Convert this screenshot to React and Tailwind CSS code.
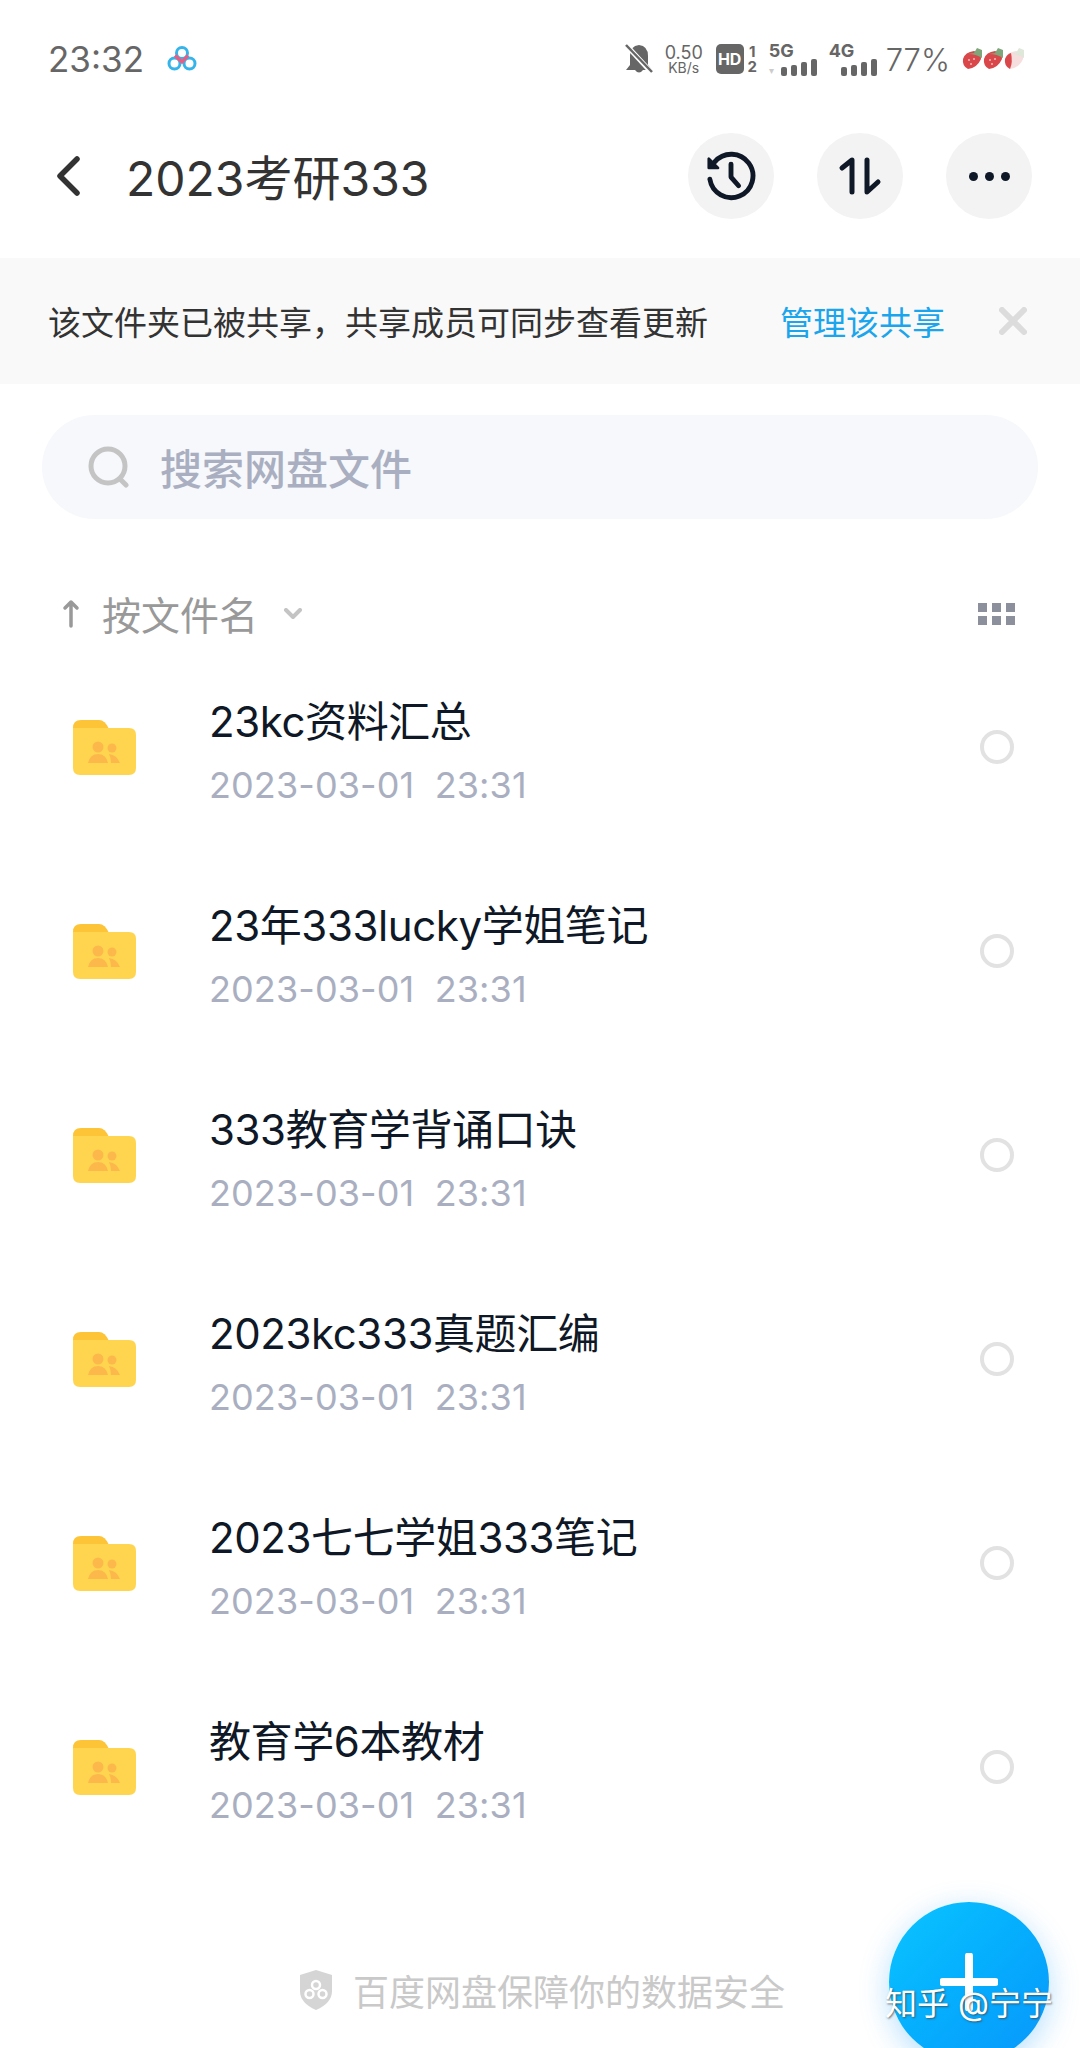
const files = ["23kc资料汇总", "23年333lucky学姐笔记", "333教育学背诵口诀", "2023kc333真题汇编", "2023七七学姐333笔记", "教育学6本教材"]

function CloudLogo({ className, stroke1 = "#35b4ea", stroke2 = "#ef5b7f" }) {
  return (
    <svg viewBox="0 0 30 26" className={className} fill="none">
      <circle cx="7.5" cy="17.5" r="5.5" stroke={stroke1} strokeWidth="3" />
      <circle cx="22.5" cy="17.5" r="5.5" stroke={stroke1} strokeWidth="3" />
      <circle cx="15" cy="7" r="5.5" stroke="#35b4ea" strokeWidth="3" />
      <path d="M8 9.5 L15 16 L21 9.5" stroke={stroke2} strokeWidth="3.2" />
    </svg>
  )
}

function Bars() {
  return (
    <div className="flex items-end gap-[4px]">
      <span className="w-[6px] h-[9px] rounded-[2px] bg-[#666666]" />
      <span className="w-[6px] h-[11px] rounded-[2px] bg-[#666666]" />
      <span className="w-[6px] h-[14px] rounded-[2px] bg-[#666666]" />
      <span className="w-[6px] h-[17px] rounded-[2px] bg-[#666666]" />
    </div>
  )
}

function Strawberry({ pale }) {
  return (
    <svg viewBox="0 0 21 22" className="w-[21px] h-[22px]">
      <path d="M1 11 Q3 4 12 3 Q20 5 19 11 Q15 20 6 21 Q0 18 1 11Z" fill={pale ? "#f6dede" : "#d9474a"} />
      <path d="M6 6 L12 5 L15 0 L20 2 L20 10 Q14 6 6 6Z" fill={pale ? "#dfe6da" : "#7fa67a"} />
      {pale ? <path d="M1 11 Q3 6 7 5 Q9 14 6 21 Q0 18 1 11Z" fill="#d9474a" /> : null}
      {pale ? null : <circle cx="7" cy="12" r="1" fill="#f4b9b9" />}
      {pale ? null : <circle cx="12" cy="11" r="1" fill="#f4b9b9" />}
      {pale ? null : <circle cx="9" cy="16" r="1" fill="#f4b9b9" />}
    </svg>
  )
}

function FolderIcon() {
  return (
    <svg viewBox="0 0 63 55" className="w-[63px] h-[55px] mb-[10px]">
      <path d="M0 8 Q0 0 8 0 H26 Q32 0 36 9 H0Z" fill="#fcc436" />
      <path d="M0 8 H56 Q63 8 63 15 V48 Q63 55 56 55 H7 Q0 55 0 48Z" fill="#ffd54f" />
      <circle cx="25" cy="27" r="5.5" fill="#fdb84c" />
      <circle cx="39" cy="28" r="4.5" fill="#fdb84c" />
      <path d="M15 43 Q17 34 25 34 Q33 34 35 43Z" fill="#fdb84c" />
      <path d="M36 34 Q44 35 47 43 H38 Q38 38 36 34Z" fill="#fdb84c" />
    </svg>
  )
}

function FileRow({ name }) {
  return (
    <div className="flex items-center h-[204px] pl-[73px] pr-[66px]">
      <FolderIcon />
      <div className="ml-[73px] flex-1">
        <div className="pt-[3px] text-[42px] leading-[50px] tracking-[-0.4px] text-[#0f1826]">{name}</div>
        <div className="mt-[13px] text-[36px] leading-[50px] tracking-[0.1px] text-[#a9afc0] whitespace-pre">2023-03-01  23:31</div>
      </div>
      <span className="w-[34px] h-[34px] mb-[10px] rounded-full border-4 border-[#e2e2e2]" />
    </div>
  )
}

export default function App() {
  return (
    <div className="relative w-[1080px] h-[2048px] overflow-hidden bg-white font-['Inter','Noto_Sans_CJK_SC',sans-serif]">
      {/* 状态栏 */}
      <div className="flex items-center h-[118px] pl-[48px] pr-[55px] text-[#666666]">
        <span className="text-[35px] leading-none">23:32</span>
        <CloudLogo className="ml-[23px] w-[30px] h-[26px]" />
        <div className="ml-auto flex items-center">
          <svg viewBox="0 0 28 30" className="w-[28px] h-[30px]">
            <path d="M14 1 Q23 2 23 12 V21 L27 26 H1 L5 21 V12 Q5 2 14 1Z" fill="#666666" />
            <path d="M10 26 Q14 31 18 26Z" fill="#666666" />
            <path d="M1 1 L27 29" stroke="#ffffff" strokeWidth="5" />
            <path d="M1 1 L27 28" stroke="#666666" strokeWidth="2.5" />
          </svg>
          <div className="ml-[12px] w-[38px] text-center leading-none">
            <div className="text-[18px] leading-[17px]">0.50</div>
            <div className="text-[14px] leading-[13px]">KB/s</div>
          </div>
          <div className="ml-[13px] w-[28px] h-[30px] rounded-[5px] bg-[#666666] text-white text-[16px] font-bold flex items-center justify-center leading-none">HD</div>
          <div className="ml-[3px] text-[15px] font-bold leading-[15px] w-[11px] text-center">
            <div>1</div>
            <div>2</div>
          </div>
          <div className="ml-[11px] w-[48px] flex flex-col">
            <span className="text-[18px] font-bold leading-[17px]">5G</span>
            <div className="flex items-end justify-between">
              <span className="text-[10px] leading-[12px] text-[#cccccc]">▾</span>
              <Bars />
            </div>
          </div>
          <div className="ml-[12px] w-[48px] flex flex-col">
            <span className="text-[18px] font-bold leading-[17px]">4G</span>
            <div className="flex justify-end">
              <Bars />
            </div>
          </div>
          <span className="ml-[9px] text-[31px] leading-none font-light">77%</span>
          <div className="ml-[12px] flex">
            <Strawberry />
            <Strawberry />
            <Strawberry pale />
          </div>
        </div>
      </div>

      {/* 标题栏 */}
      <div className="flex items-center h-[116px] mb-[24px] pl-[56px] pr-[48px]">
        <svg viewBox="0 0 24 40" className="w-[24px] h-[40px]">
          <path d="M21 3 L4 20 L21 37" fill="none" stroke="#333333" strokeWidth="5.5" strokeLinecap="round" strokeLinejoin="round" />
        </svg>
        <span className="ml-[46px] pt-[6px] text-[48px] leading-none text-[#333333]">2023考研333</span>
        <div className="ml-auto flex gap-[43px]">
          <div className="w-[86px] h-[86px] rounded-full bg-[#f3f3f4] flex items-center justify-center">
            <svg viewBox="0 0 48 48" className="w-[52px] h-[52px]" fill="none" stroke="#0f1826" strokeWidth="4.5" strokeLinecap="round" strokeLinejoin="round">
              <path d="M4.5 27 A20 20 0 1 0 9 11" />
              <path d="M3.5 8 V16.5 H12 Z" fill="#0f1826" strokeWidth="2.5" />
              <path d="M24 13 V25 L31 33" />
            </svg>
          </div>
          <div className="w-[86px] h-[86px] rounded-full bg-[#f3f3f4] flex items-center justify-center">
            <svg viewBox="0 0 44 40" className="w-[44px] h-[40px]" fill="none" stroke="#0f1826" strokeWidth="5" strokeLinecap="round" strokeLinejoin="round">
              <path d="M14 36 V4 L4 12" />
              <path d="M29 4 V36 L40 26" />
            </svg>
          </div>
          <div className="w-[86px] h-[86px] rounded-full bg-[#f3f3f4] flex items-center justify-center gap-[7px]">
            <span className="w-[9px] h-[9px] rounded-full bg-[#0f1826]" />
            <span className="w-[9px] h-[9px] rounded-full bg-[#0f1826]" />
            <span className="w-[9px] h-[9px] rounded-full bg-[#0f1826]" />
          </div>
        </div>
      </div>

      {/* 共享提示 */}
      <div className="flex items-center h-[126px] pl-[48px] pr-[53px] bg-[#f9f9f9]">
        <span className="pt-[5px] text-[33px] leading-none text-[#333333] whitespace-nowrap">该文件夹已被共享，共享成员可同步查看更新</span>
        <span className="ml-[72px] pt-[5px] text-[33px] leading-none text-[#1ba5ec] whitespace-nowrap">管理该共享</span>
        <svg viewBox="0 0 28 28" className="ml-auto w-[28px] h-[28px]">
          <path d="M3 3 L25 25 M25 3 L3 25" stroke="#dcdcdc" strokeWidth="6" strokeLinecap="round" />
        </svg>
      </div>

      {/* 搜索框 */}
      <div className="flex items-center h-[104px] mt-[31px] mx-[42px] pl-[46px] rounded-full bg-[#f6f8fb]">
        <svg viewBox="0 0 42 42" className="w-[42px] h-[42px]" fill="none" stroke="#c4c4c4" strokeWidth="5" strokeLinecap="round">
          <circle cx="20" cy="20" r="17" />
          <path d="M32 33 L38 39" />
        </svg>
        <span className="ml-[30px] pt-[5px] text-[42px] leading-none font-medium text-[#a9afc0]">搜索网盘文件</span>
      </div>

      {/* 排序 */}
      <div className="flex items-center h-[72px] mt-[59px] pl-[62px] pr-[65px]">
        <svg viewBox="0 0 18 30" className="w-[18px] h-[30px]" fill="none" stroke="#999999" strokeWidth="3.5" strokeLinecap="round" strokeLinejoin="round">
          <path d="M9 27 V3 M3 9 L9 3 L15 9" />
        </svg>
        <span className="ml-[22px] pt-[2px] text-[39px] leading-none text-[#999999]">按文件名</span>
        <svg viewBox="0 0 20 12" className="ml-[25px] w-[20px] h-[12px]" fill="none" stroke="#c4c4c4" strokeWidth="4" strokeLinecap="round" strokeLinejoin="round">
          <path d="M3 2 L10 9 L17 2" />
        </svg>
        <div className="ml-auto grid grid-cols-3 gap-x-[5px] gap-y-[4px]">
          {[0, 1, 2, 3, 4, 5].map((i) => (
            <span key={i} className="w-[9px] h-[9px] bg-[#8c8f9c]" />
          ))}
        </div>
      </div>

      {/* 文件列表 */}
      <div>
        {files.map((name) => (
          <FileRow key={name} name={name} />
        ))}
      </div>

      {/* 底部 */}
      <div className="flex items-center h-[52px] mt-[90px] pl-[298px]">
        <svg viewBox="0 0 36 42" className="w-[36px] h-[42px]">
          <path d="M18 1 L34 6 V22 Q34 34 18 41 Q2 34 2 22 V6Z" fill="#d5d5d5" />
          <circle cx="11.5" cy="25" r="4" fill="none" stroke="#ffffff" strokeWidth="2.5" />
          <circle cx="24.5" cy="25" r="4" fill="none" stroke="#ffffff" strokeWidth="2.5" />
          <circle cx="18" cy="16" r="4" fill="none" stroke="#ffffff" strokeWidth="2.5" />
        </svg>
        <span className="ml-[19px] pt-[5px] text-[36px] leading-none text-[#c9c9c9]">百度网盘保障你的数据安全</span>
      </div>

      {/* 新建按钮 */}
      <div className="absolute left-[889px] top-[1902px] w-[160px] h-[160px] rounded-full bg-gradient-to-br from-[#0cc4ff] to-[#0a96fb] shadow-[0_8px_30px_rgba(10,150,250,0.3)] flex items-center justify-center">
        <svg viewBox="0 0 58 58" className="w-[58px] h-[58px]">
          <path d="M29 3 V55 M3 29 H55" stroke="#ffffff" strokeWidth="8" strokeLinecap="round" />
        </svg>
      </div>

      {/* 水印 */}
      <span className="absolute left-[885px] top-[1984px] text-[32px] leading-[40px] text-white whitespace-nowrap [text-shadow:1px_1px_2px_rgba(60,60,60,0.7)]">知乎 @宁宁</span>
    </div>
  )
}
